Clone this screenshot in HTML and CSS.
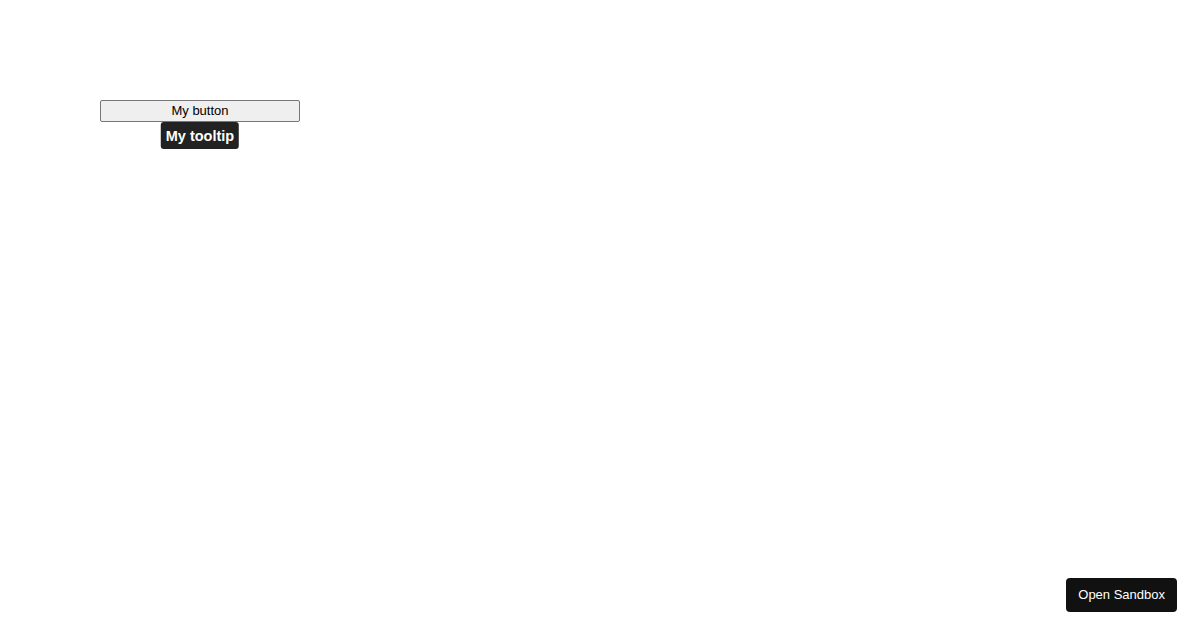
FILE: index.html
```html
<!DOCTYPE html>
<html lang="en">
<head>
    <meta charset="UTF-8">
    <meta name="viewport" content="width=device-width, initial-scale=1.0">
    <title>Tooltip</title>
    <link rel="stylesheet" href="styles.css">
</head>
<body>
    <!-- Button with tooltip -->
    <div class="anchor">
        <button type="button" class="my-button">My button</button>
        <div class="tooltip">My tooltip</div>
    </div>

    <a class="sandbox-btn" href="#">Open Sandbox</a>
</body>
</html>
```

FILE: styles.css
```css
/* Page */
body {
    margin: 0;
    font-family: "Liberation Sans", Arial, sans-serif;
    background: #fff;
    height: 630px;
    position: relative;
}

.anchor {
    position: relative;
    width: 200px;
    padding: 100px 0 0 100px;
}

.my-button {
    display: block;
    width: 200px;
    height: 22px;
    margin: 0;
    padding: 0 0 2px;
    font-family: "Liberation Sans", Arial, sans-serif;
    font-size: 13px;
    color: #000;
    background: #efefef;
    border: 1px solid #767676;
    border-radius: 2px;
}

/* Tooltip sits over the content below */
.tooltip {
    position: absolute;
    top: 122px;
    left: 200px;
    transform: translateX(-50%);
    background: #222;
    color: #fff;
    font-weight: bold;
    font-size: 14.5px;
    line-height: 17px;
    padding: 6px 5px 4px;
    border-radius: 3px;
    white-space: nowrap;
}

.sandbox-btn {
    position: absolute;
    right: 23px;
    bottom: 18px;
    background: #111;
    color: #fff;
    font-size: 13px;
    line-height: 16px;
    padding: 9px 12px;
    border-radius: 4px;
    text-decoration: none;
}
```
